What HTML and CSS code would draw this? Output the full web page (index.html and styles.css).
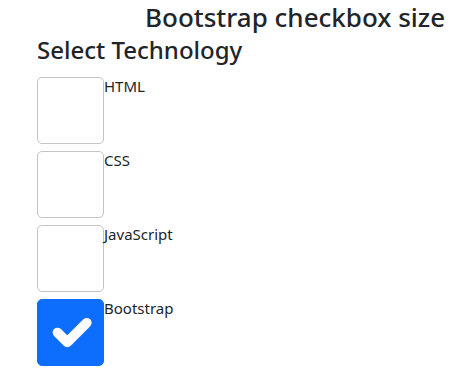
FILE: index.html
```html
<!DOCTYPE html>
<html>
	<head>
		<meta charset="utf-8" />
		<title>Bootstrap checkbox size</title>
		<link rel="stylesheet" href="styles.css">
	</head>
	<body>
		<h3 class="title">Bootstrap checkbox size</h3>
		<div class="wrap">
			<h4 class="subtitle">Select Technology</h4>
			<div class="checks">
				<label class="check">
					<span class="box"></span>
					<span class="text">HTML</span>
				</label>
				<label class="check">
					<span class="box"></span>
					<span class="text">CSS</span>
				</label>
				<label class="check">
					<span class="box"></span>
					<span class="text">JavaScript</span>
				</label>
				<label class="check">
					<span class="box on">
						<svg viewBox="0 0 20 20"><path fill="none" stroke="#fff" stroke-linecap="round" stroke-linejoin="round" stroke-width="3" d="m6 10 3 3 6-6"/></svg>
					</span>
					<span class="text">Bootstrap</span>
				</label>
			</div>
		</div>
	</body>
</html>
```

FILE: styles.css
```css
*{margin: 0;padding: 0;box-sizing: border-box;}
body{
	font-family: "Noto Sans", "Open Sans", sans-serif;
	color: #212529;
	background: #fff;
}
.title{
	font-size: 26px;
	font-weight: 500;
	line-height: 36px;
	margin-top: -1px;
	padding-left: 145px;
	white-space: nowrap;
}
.wrap{
	padding: 1px 0 0 37px;
}
.subtitle{
	font-size: 24px;
	font-weight: 500;
	line-height: 28px;
}
.checks{
	display: flex;
	flex-direction: column;
	gap: 7px;
	padding-top: 13px;
}
.check{
	display: flex;
	align-items: flex-start;
	font-size: 15px;
	line-height: 18px;
}
.box{
	width: 67px;
	height: 67px;
	border: 1px solid #c4c4c4;
	border-radius: 5px;
	background: #fff;
	display: block;
}
.box.on{
	background: #0d6efd;
	border-color: #0d6efd;
}
.box svg{
	display: block;
	width: 100%;
	height: 100%;
}
```
